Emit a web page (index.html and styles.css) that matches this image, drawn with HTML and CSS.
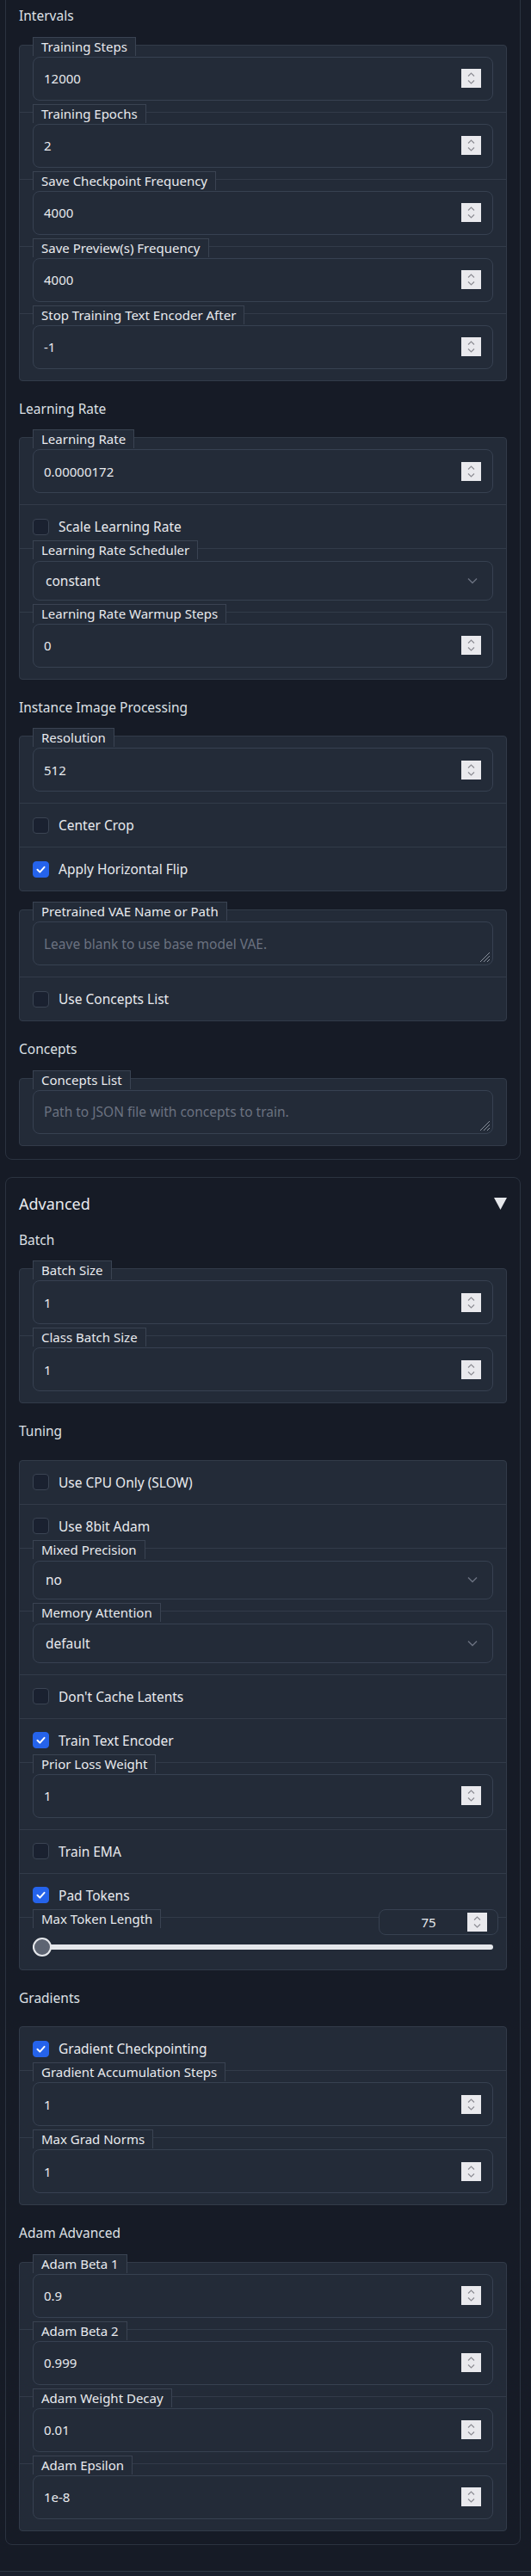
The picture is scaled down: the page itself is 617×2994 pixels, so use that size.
FILE: index.html
```html
<!DOCTYPE html>
<html lang="en">
<head>
<meta charset="utf-8">
<title>Training settings</title>
<link rel="stylesheet" href="styles.css">
</head>
<body>
<svg class="defs" width="0" height="0" aria-hidden="true">
  <defs>
    <symbol id="spin" viewBox="0 0 23 22">
      <rect width="23" height="22" fill="#e9e9ed"/>
      <path d="M8 8.5 L11.5 5 L15 8.5 M8 13.5 L11.5 17 L15 13.5" fill="none" stroke="#8d8d94" stroke-width="1.2"/>
    </symbol>
    <symbol id="chev" viewBox="0 0 12 8">
      <path d="M1 1.5 L6 6.5 L11 1.5" fill="none" stroke="#6b7280" stroke-width="1.4"/>
    </symbol>
    <symbol id="check" viewBox="0 0 19 19">
      <path d="M5 9.8 L8.2 13 L14 6.5" fill="none" stroke="#ffffff" stroke-width="2.2" stroke-linecap="round" stroke-linejoin="round"/>
    </symbol>
    <symbol id="grip" viewBox="0 0 16 16">
      <path d="M15 4 L4 15 M15 8 L8 15 M15 12 L12 15" fill="none" stroke="#8a919c" stroke-width="1"/>
    </symbol>
  </defs>
</svg>

<div class="box box-first">
  <div class="stack">
    <div class="title">Intervals</div>
    <div class="group">
      <div class="row field"><div class="tab">Training Steps</div><div class="num"><span>12000</span><svg class="spin"><use href="#spin"/></svg></div></div>
      <div class="row field"><div class="tab">Training Epochs</div><div class="num"><span>2</span><svg class="spin"><use href="#spin"/></svg></div></div>
      <div class="row field"><div class="tab">Save Checkpoint Frequency</div><div class="num"><span>4000</span><svg class="spin"><use href="#spin"/></svg></div></div>
      <div class="row field"><div class="tab">Save Preview(s) Frequency</div><div class="num"><span>4000</span><svg class="spin"><use href="#spin"/></svg></div></div>
      <div class="row field"><div class="tab">Stop Training Text Encoder After</div><div class="num"><span>-1</span><svg class="spin"><use href="#spin"/></svg></div></div>
    </div>

    <div class="title">Learning Rate</div>
    <div class="group">
      <div class="row field"><div class="tab">Learning Rate</div><div class="num"><span>0.00000172</span><svg class="spin"><use href="#spin"/></svg></div></div>
      <div class="row cb-row"><span class="cb"></span><span>Scale Learning Rate</span></div>
      <div class="row field dd-field"><div class="tab">Learning Rate Scheduler</div><div class="dd"><span>constant</span><svg class="chev"><use href="#chev"/></svg></div></div>
      <div class="row field"><div class="tab">Learning Rate Warmup Steps</div><div class="num"><span>0</span><svg class="spin"><use href="#spin"/></svg></div></div>
    </div>

    <div class="title">Instance Image Processing</div>
    <div class="group">
      <div class="row field"><div class="tab">Resolution</div><div class="num"><span>512</span><svg class="spin"><use href="#spin"/></svg></div></div>
      <div class="row cb-row"><span class="cb"></span><span>Center Crop</span></div>
      <div class="row cb-row"><span class="cb on"><svg class="tick"><use href="#check"/></svg></span><span>Apply Horizontal Flip</span></div>
    </div>

    <div class="group">
      <div class="row field"><div class="tab">Pretrained VAE Name or Path</div><div class="ta"><span class="ph">Leave blank to use base model VAE.</span><svg class="grip"><use href="#grip"/></svg></div></div>
      <div class="row cb-row"><span class="cb"></span><span>Use Concepts List</span></div>
    </div>

    <div class="title">Concepts</div>
    <div class="group">
      <div class="row field"><div class="tab">Concepts List</div><div class="ta"><span class="ph">Path to JSON file with concepts to train.</span><svg class="grip"><use href="#grip"/></svg></div></div>
    </div>
  </div>
</div>

<div class="box">
  <div class="box-head">
    <span class="box-title">Advanced</span>
    <svg class="tri" viewBox="0 0 15 14"><polygon points="0,0 15,0 7.5,14" fill="#e5e7eb"/></svg>
  </div>
  <div class="stack">
    <div class="title">Batch</div>
    <div class="group">
      <div class="row field"><div class="tab">Batch Size</div><div class="num"><span>1</span><svg class="spin"><use href="#spin"/></svg></div></div>
      <div class="row field"><div class="tab">Class Batch Size</div><div class="num"><span>1</span><svg class="spin"><use href="#spin"/></svg></div></div>
    </div>

    <div class="title">Tuning</div>
    <div class="group">
      <div class="row cb-row"><span class="cb"></span><span>Use CPU Only (SLOW)</span></div>
      <div class="row cb-row"><span class="cb"></span><span>Use 8bit Adam</span></div>
      <div class="row field dd-field"><div class="tab">Mixed Precision</div><div class="dd"><span>no</span><svg class="chev"><use href="#chev"/></svg></div></div>
      <div class="row field dd-field"><div class="tab">Memory Attention</div><div class="dd"><span>default</span><svg class="chev"><use href="#chev"/></svg></div></div>
      <div class="row cb-row"><span class="cb"></span><span>Don't Cache Latents</span></div>
      <div class="row cb-row"><span class="cb on"><svg class="tick"><use href="#check"/></svg></span><span>Train Text Encoder</span></div>
      <div class="row field"><div class="tab">Prior Loss Weight</div><div class="num"><span>1</span><svg class="spin"><use href="#spin"/></svg></div></div>
      <div class="row cb-row"><span class="cb"></span><span>Train EMA</span></div>
      <div class="row cb-row"><span class="cb on"><svg class="tick"><use href="#check"/></svg></span><span>Pad Tokens</span></div>
      <div class="row slider-row">
        <div class="slider-head">
          <div class="tab tab-inline">Max Token Length</div>
          <div class="mini-num"><span class="mini-val">75</span><svg class="spin"><use href="#spin"/></svg></div>
        </div>
        <div class="slider"><span class="track"></span><span class="thumb"></span></div>
      </div>
    </div>

    <div class="title">Gradients</div>
    <div class="group">
      <div class="row cb-row"><span class="cb on"><svg class="tick"><use href="#check"/></svg></span><span>Gradient Checkpointing</span></div>
      <div class="row field"><div class="tab">Gradient Accumulation Steps</div><div class="num"><span>1</span><svg class="spin"><use href="#spin"/></svg></div></div>
      <div class="row field"><div class="tab">Max Grad Norms</div><div class="num"><span>1</span><svg class="spin"><use href="#spin"/></svg></div></div>
    </div>

    <div class="title">Adam Advanced</div>
    <div class="group">
      <div class="row field"><div class="tab">Adam Beta 1</div><div class="num"><span>0.9</span><svg class="spin"><use href="#spin"/></svg></div></div>
      <div class="row field"><div class="tab">Adam Beta 2</div><div class="num"><span>0.999</span><svg class="spin"><use href="#spin"/></svg></div></div>
      <div class="row field"><div class="tab">Adam Weight Decay</div><div class="num"><span>0.01</span><svg class="spin"><use href="#spin"/></svg></div></div>
      <div class="row field"><div class="tab">Adam Epsilon</div><div class="num"><span>1e-8</span><svg class="spin"><use href="#spin"/></svg></div></div>
    </div>
  </div>
</div>

<div class="footer"></div>
</body>
</html>
```

FILE: styles.css
```css
* { box-sizing: border-box; }

html, body {
  margin: 0;
  background: #161b26;
}

body {
  font-family: "Noto Sans", "DejaVu Sans", sans-serif;
  color: #e5e7eb;
  overflow: hidden;
}

.defs { position: absolute; width: 0; height: 0; }

.box {
  margin: 0 12px 0 6px;
  border: 1px solid #2b3340;
  border-radius: 8px;
  padding: 15px;
}

.box-first { margin-top: -9px; }
.box + .box { margin-top: 20px; }

.box-head {
  display: flex;
  justify-content: space-between;
  align-items: center;
  height: 30px;
  margin-bottom: 16px;
}

.box-title {
  font-size: 18px;
  line-height: 30px;
  color: #e8eaee;
}

.tri { width: 15px; height: 14px; }

.stack {
  display: flex;
  flex-direction: column;
  gap: 21px;
}

.title {
  font-size: 15.5px;
  line-height: 23.5px;
  color: #dde0e5;
}

.group {
  background: #232b38;
  border: 1px solid #323b49;
  border-radius: 4px;
  display: flex;
  flex-direction: column;
}

.row + .row { border-top: 1px solid #323b49; }

.field {
  display: flex;
  flex-direction: column;
  align-items: flex-start;
  padding: 0 15px 13px;
}

.tab {
  margin-top: -10px;
  height: 22px;
  border: 1px solid #3a4352;
  border-bottom: none;
  background: #232b38;
  padding: 0 9px;
  font-size: 15px;
  line-height: 21px;
  color: #e8eaee;
  white-space: nowrap;
}

.num, .dd, .ta {
  align-self: stretch;
  border: 1px solid #374151;
  border-radius: 8px;
  display: flex;
  align-items: center;
}

.num {
  margin-top: 1px;
  height: 51px;
  justify-content: space-between;
  padding: 0 13px 0 12px;
  font-size: 15px;
  color: #e8eaee;
}

.spin { width: 23px; height: 22px; flex: none; }

.dd {
  margin-top: 2px;
  height: 45.5px;
  justify-content: space-between;
  padding: 0 17px 0 14px;
  font-size: 15.5px;
  color: #e8eaee;
}

.chev { width: 12px; height: 8px; flex: none; }

.ta {
  margin-top: 1px;
  height: 51px;
  padding: 0 12px;
  position: relative;
  font-size: 15.5px;
}

.ph { color: #6b7280; }

.grip {
  position: absolute;
  right: 2px;
  bottom: 2px;
  width: 16px;
  height: 16px;
}

.cb-row {
  display: flex;
  align-items: center;
  gap: 11px;
  padding: 15px;
  font-size: 15.5px;
  line-height: 20px;
  color: #e8eaee;
}

.cb {
  width: 19px;
  height: 19px;
  flex: none;
  border-radius: 4px;
  border: 1px solid #3b4453;
  background: #1a2130;
  display: flex;
}

.cb.on {
  background: #2563eb;
  border-color: #2563eb;
}

.tick { width: 17px; height: 17px; }

.slider-row {
  padding: 0 15px 15px;
}

.slider-head {
  display: flex;
  justify-content: space-between;
  align-items: flex-start;
  margin-top: -10px;
  height: 30px;
}

.tab-inline { margin-top: 0; }

.mini-num {
  width: 139px;
  height: 30px;
  margin-right: -6px;
  border: 1px solid #374151;
  border-radius: 8px;
  background: #232b38;
  display: flex;
  align-items: center;
  padding: 0 12px;
  font-size: 15px;
  color: #e8eaee;
}

.mini-val { flex: 1; text-align: center; }

.slider {
  position: relative;
  height: 22px;
  margin-top: 3px;
  display: flex;
  align-items: center;
}

.track {
  flex: 1;
  height: 6px;
  border-radius: 3px;
  background: #e5e7eb;
}

.thumb {
  position: absolute;
  left: 0;
  top: 0;
  width: 22px;
  height: 22px;
  border-radius: 50%;
  background: #5d6472;
  border: 2px solid #e5e7eb;
}

.footer {
  margin-top: 30px;
  height: 40px;
  border-top: 1px solid #2e3644;
  background: #1a1f2c;
}
```
